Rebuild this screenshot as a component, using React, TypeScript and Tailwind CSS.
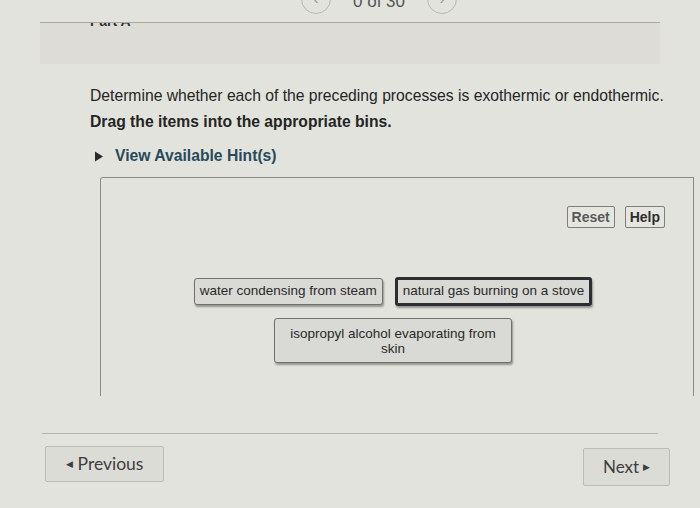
import React from "react";

function ItemCard({ label, active, wide }: { label: string; active?: boolean; wide?: boolean }) {
    return (
        <div
            className={
                active
                    ? "flex items-center justify-center h-[29px] px-[5px] bg-[#d9d9d5] border-[3px] border-[#2b2f33] rounded-[3px] shadow-[1px_2px_2px_rgba(0,0,0,0.35)] text-[13.5px] text-[#2a2a2a]"
                    : wide
                      ? "flex items-center justify-center w-[238px] h-[45px] px-[10px] bg-[#d9d9d5] border border-[#6f716f] rounded-[3px] shadow-[1px_2px_2px_rgba(0,0,0,0.35)] text-[13.5px] leading-[15px] text-center text-[#2a2a2a]"
                      : "flex items-center justify-center h-[27px] px-[5px] bg-[#d9d9d5] border border-[#6f716f] rounded-[3px] shadow-[1px_2px_2px_rgba(0,0,0,0.35)] text-[13.5px] text-[#2a2a2a]"
            }
        >
            {label}
        </div>
    );
}

export default function App() {
    return (
        <div className="w-[700px] h-[508px] overflow-hidden bg-[#e3e3dd] font-['Liberation_Sans',Arial,sans-serif] text-[#252525] flex flex-col">
            {/* top pager, cut off by the photo */}
            <div className="h-[22px] overflow-hidden">
                <div className="flex items-end justify-center gap-[22px] -mt-[16px] pl-[58px]">
                    <div className="w-[30px] h-[30px] rounded-full border border-[#b9b9b4] flex items-center justify-center text-[#8a8a86] text-[14px]">‹</div>
                    <span className="text-[17px] text-[#555] leading-[24px]">0 of 30</span>
                    <div className="w-[30px] h-[30px] rounded-full border border-[#b9b9b4] flex items-center justify-center text-[#8a8a86] text-[14px]">›</div>
                </div>
            </div>
            <div className="relative mx-[40px] h-[42px] border-t border-[#a9aaa5] bg-[#dddcd7] overflow-hidden">
                <span className="absolute left-[50px] -top-[9px] text-[14px] font-bold text-[#333] leading-[14px]">Part A</span>
            </div>

            <div className="pl-[90px] pt-[22px] flex flex-col">
                <p className="text-[15.7px] leading-[20px]">
                    Determine whether each of the preceding processes is exothermic or endothermic.
                </p>
                <p className="mt-[6px] text-[15.7px] leading-[20px] font-bold">Drag the items into the appropriate bins.</p>
                <div className="mt-[14px] flex items-center gap-[11px] pl-[4px] text-[15.7px] leading-[20px] font-bold text-[#284a5a]">
                    <svg width="10" height="11" viewBox="0 0 10 11">
                        <path d="M1 0.5 L9 5.5 L1 10.5 Z" fill="#2a2d30" />
                    </svg>
                    <span>View Available Hint(s)</span>
                </div>
            </div>

            <div className="ml-[100px] mr-[6px] mt-[11px] h-[219px] border-l border-t border-r border-[#8b8c88] rounded-tl-[3px] flex flex-col">
                <div className="flex justify-end gap-[10px] pt-[28px] pr-[28px]">
                    <button className="h-[22px] px-[4px] border border-[#7d7e7b] rounded-[2px] bg-[#e6e6e1] text-[14px] font-bold text-[#5a5a5a]">
                        Reset
                    </button>
                    <button className="h-[22px] px-[4px] border border-[#7d7e7b] rounded-[2px] bg-[#e6e6e1] text-[14px] font-bold text-[#2e2e2e]">
                        Help
                    </button>
                </div>
                <div className="mt-[49px] flex flex-col items-center gap-[12px] pr-[8px]">
                    <div className="flex items-center gap-[12px]">
                        <ItemCard label="water condensing from steam" />
                        <ItemCard label="natural gas burning on a stove" active />
                    </div>
                    <ItemCard label="isopropyl alcohol evaporating from skin" wide />
                </div>
            </div>

            <div className="mx-[42px] mt-[37px] border-t border-[#b4b5b0]" />
            <div className="flex items-start justify-between pl-[45px] pr-[30px] pt-[12px] font-['Lato',sans-serif]">
                <button className="w-[119px] h-[36px] border border-[#bcbcb7] rounded-[2px] bg-[#dcdcd7] flex items-center justify-center gap-[5px] text-[17.5px] text-[#3e3e3e]">
                    <span className="text-[9px]">◀</span>
                    <span>Previous</span>
                </button>
                <button className="mt-[2px] w-[87px] h-[38px] border border-[#bcbcb7] rounded-[2px] bg-[#dcdcd7] flex items-center justify-center gap-[4px] text-[17px] text-[#3e3e3e]">
                    <span>Next</span>
                    <span className="text-[9px]">▶</span>
                </button>
            </div>
        </div>
    );
}
